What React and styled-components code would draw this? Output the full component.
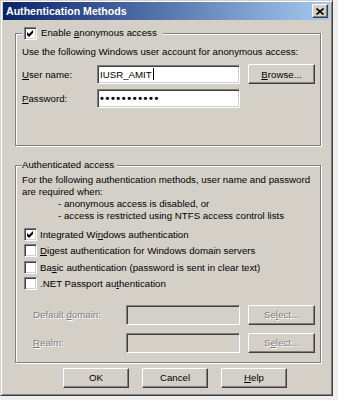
import React from "react";
import styled, { createGlobalStyle } from "styled-components";

const GlobalStyle = createGlobalStyle`
  html, body { margin: 0; padding: 0; }
  body {
    background: #eeeeec;
    font-family: "Liberation Sans", Arial, sans-serif;
  }
`;

const Window = styled.div`
  box-sizing: border-box;
  width: 333px;
  background: #d4d0c8;
  border: 1px solid;
  border-color: #d4d0c8 #404040 #404040 #d4d0c8;
  box-shadow: inset 1px 1px 0 #fff, inset -1px -1px 0 #808080;
  padding: 1px 2px 2px 2px;
  font-size: 9.7px;
  color: #000;
`;

const TitleBar = styled.div`
  height: 18px;
  display: flex;
  align-items: center;
  justify-content: space-between;
  padding: 0 2px 0 3px;
  background: linear-gradient(to right, #0a246a, #a6caf0);
`;

const Title = styled.span`
  color: #fff;
  font-weight: bold;
  font-size: 10.6px;
`;

const CloseButton = styled.div`
  box-sizing: border-box;
  width: 16px;
  height: 14px;
  display: flex;
  align-items: center;
  justify-content: center;
  background: #d4d0c8;
  border: 1px solid;
  border-color: #fff #404040 #404040 #fff;
  box-shadow: inset -1px -1px 0 #808080;
`;

const Body = styled.div`
  padding: 6px 9px 5px 12px;
`;

const Group = styled.fieldset`
  margin: 0;
  min-width: 0;
  padding: ${(p) => p.$pt}px 6px ${(p) => p.$pb}px 6px;
  border: 1px solid #808080;
  box-shadow: 1px 1px 0 #fff, inset 1px 1px 0 #fff;
  & + & {
    margin-top: 12px;
  }
`;

const Legend = styled.legend`
  padding: ${(p) => (p.$check ? "0 6px 0 2px" : "0 3px 0 0")};
  height: 14px;
  line-height: 14px;
  background: #d4d0c8;
`;

const LegendInner = styled.span`
  display: flex;
  align-items: center;
  gap: 4px;
  height: 14px;
`;

const Text = styled.div`
  line-height: ${(p) => p.$lh || 13}px;
  padding-left: ${(p) => p.$indent || 0}px;
  white-space: nowrap;
`;

const FieldRow = styled.div`
  display: grid;
  grid-template-columns: ${(p) => p.$cols};
  column-gap: 8px;
  align-items: center;
  height: ${(p) => p.$h}px;
  margin-top: ${(p) => p.$mt}px;
  padding-left: ${(p) => p.$indent || 0}px;
`;

const Label = styled.span`
  white-space: nowrap;
  color: ${(p) => (p.$disabled ? "#808080" : "#000")};
  text-shadow: ${(p) => (p.$disabled ? "1px 1px 0 #fff" : "none")};
`;

const Field = styled.div`
  box-sizing: border-box;
  height: ${(p) => p.$h || 19}px;
  display: flex;
  align-items: center;
  padding-left: 2px;
  background: ${(p) => (p.$disabled ? "#d4d0c8" : "#fff")};
  border: 1px solid;
  border-color: #808080 #fff #fff #808080;
  box-shadow: inset 1px 1px 0 #404040, inset -1px -1px 0 #d4d0c8;
  white-space: nowrap;
`;

const Caret = styled.span`
  display: inline-block;
  width: 1px;
  height: 12px;
  background: #000;
  margin-left: 1px;
`;

const Dots = styled.span`
  font-size: 11px;
  font-weight: bold;
  letter-spacing: 1.6px;
  line-height: 1;
`;

const Button = styled.div`
  box-sizing: border-box;
  width: ${(p) => p.$w || 67}px;
  height: 20px;
  display: flex;
  align-items: center;
  justify-content: center;
  background: #d4d0c8;
  border: 1px solid;
  border-color: #fff #404040 #404040 #fff;
  box-shadow: inset -1px -1px 0 #808080;
  color: ${(p) => (p.$disabled ? "#808080" : "#000")};
  text-shadow: ${(p) => (p.$disabled ? "1px 1px 0 #fff" : "none")};
`;

const CheckList = styled.div`
  margin-top: 3.75px;
`;

const CheckRow = styled.div`
  display: flex;
  align-items: center;
  gap: 3px;
  height: 16.5px;
  padding-left: 2px;
`;

const Box = styled.span`
  box-sizing: border-box;
  width: 13px;
  height: 13px;
  flex: none;
  display: flex;
  background: #fff;
  border: 1px solid;
  border-color: #808080 #fff #fff #808080;
  box-shadow: inset 1px 1px 0 #404040, inset -1px -1px 0 #d4d0c8;
`;

const Buttons = styled.div`
  display: flex;
  gap: 13px;
  margin-top: 5px;
  padding-left: 48px;
`;

const Key = styled.u`
  text-decoration-thickness: 1px;
  text-underline-offset: 1px;
`;

function Check({ checked }) {
  return (
    <Box>
      {checked && (
        <svg width="11" height="11" viewBox="0 0 11 11">
          <polygon points="2,4 4,6 8,2 8,5 4,9 2,7" fill="#000" />
        </svg>
      )}
    </Box>
  );
}

const methods = [
  { checked: true, label: <>Integrated Wi<Key>n</Key>dows authentication</> },
  { checked: false, label: <><Key>D</Key>igest authentication for Windows domain servers</> },
  { checked: false, label: <>Ba<Key>s</Key>ic authentication (password is sent in clear text)</> },
  { checked: false, label: <>.NET Passport au<Key>t</Key>hentication</> },
];

export default function App() {
  return (
    <>
      <GlobalStyle />
      <Window>
        <TitleBar>
          <Title>Authentication Methods</Title>
          <CloseButton>
            <svg width="8" height="7" viewBox="0 0 8 7">
              <path d="M0.5 0.5l7 6M7.5 0.5l-7 6" stroke="#000" strokeWidth="1.6" />
            </svg>
          </CloseButton>
        </TitleBar>
        <Body>
          <Group $pt={5} $pb={37}>
            <Legend $check>
              <LegendInner>
                <Check checked />
                <span>
                  Enable <Key>a</Key>nonymous access
                </span>
              </LegendInner>
            </Legend>
            <Text>Use the following Windows user account for anonymous access:</Text>
            <FieldRow $cols="67px 143px 67px" $h={20} $mt={6}>
              <Label>
                <Key>U</Key>ser name:
              </Label>
              <Field>
                IUSR_AMIT
                <Caret />
              </Field>
              <Button>
                <span>
                  <Key>B</Key>rowse...
                </span>
              </Button>
            </FieldRow>
            <FieldRow $cols="67px 143px" $h={19} $mt={5}>
              <Label>
                <Key>P</Key>assword:
              </Label>
              <Field>
                <Dots>•••••••••••</Dots>
              </Field>
            </FieldRow>
          </Group>

          <Group $pt={2} $pb={9}>
            <Legend>Authenticated access</Legend>
            <Text $lh={12}>For the following authentication methods, user name and password</Text>
            <Text $lh={12}>are required when:</Text>
            <Text $lh={12} $indent={36}>- anonymous access is disabled, or</Text>
            <Text $lh={12} $indent={36}>- access is restricted using NTFS access control lists</Text>
            <CheckList>
              {methods.map((m, i) => (
                <CheckRow key={i}>
                  <Check checked={m.checked} />
                  <span>{m.label}</span>
                </CheckRow>
              ))}
            </CheckList>
            <FieldRow $cols="85px 114px 67px" $h={20} $mt={13} $indent={11}>
              <Label $disabled>
                Default <Key>d</Key>omain:
              </Label>
              <Field $disabled $h={20} />
              <Button $disabled>
                <span>
                  Se<Key>l</Key>ect...
                </span>
              </Button>
            </FieldRow>
            <FieldRow $cols="85px 114px 67px" $h={20} $mt={8} $indent={11}>
              <Label $disabled>
                <Key>R</Key>ealm:
              </Label>
              <Field $disabled $h={20} />
              <Button $disabled>
                <span>
                  S<Key>e</Key>lect...
                </span>
              </Button>
            </FieldRow>
          </Group>

          <Buttons>
            <Button $w={66}>OK</Button>
            <Button $w={66}>Cancel</Button>
            <Button $w={66}>
              <span>
                <Key>H</Key>elp
              </span>
            </Button>
          </Buttons>
        </Body>
      </Window>
    </>
  );
}
